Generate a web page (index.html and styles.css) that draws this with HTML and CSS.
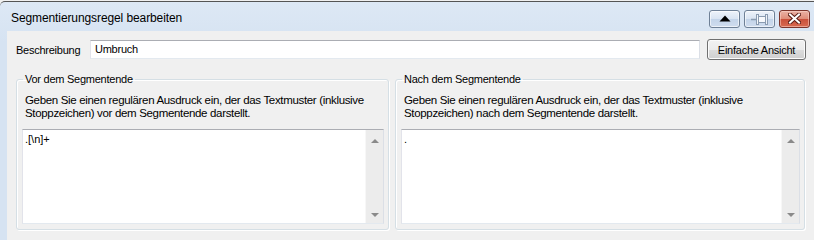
FILE: index.html
```html
<!DOCTYPE html>
<html lang="de">
<head>
    <meta charset="UTF-8">
    <meta name="viewport" content="width=device-width, initial-scale=1.0">
    <title>Segmentierungsregel bearbeiten</title>
    <link rel="stylesheet" href="styles.css">
</head>
<body>

    <div class="window">
        <div class="titlebar">
            <span class="title">Segmentierungsregel bearbeiten</span>
            <div class="caption">
                <span class="cap-btn">
                    <svg width="12" height="7" viewBox="0 0 12 7"><polygon points="6,0.5 11.5,6.5 0.5,6.5" fill="#000"/></svg>
                </span>
                <span class="cap-btn">
                    <svg width="20" height="14" viewBox="0 0 20 14">
                        <line x1="1" y1="7.5" x2="6" y2="7.5" stroke="#8b9cb1" stroke-width="1.5"/>
                        <rect x="6.5" y="2.5" width="2" height="10" fill="#f4f7fb" stroke="#8b9cb1" stroke-width="1"/>
                        <rect x="8.5" y="4.5" width="7" height="6" fill="#f7f9fc" stroke="#8b9cb1" stroke-width="1"/>
                        <rect x="15.5" y="2.5" width="2" height="10" fill="#eef2f8" stroke="#8b9cb1" stroke-width="1"/>
                    </svg>
                </span>
                <span class="cap-btn close">
                    <svg width="13" height="11" viewBox="0 0 13 11">
                        <path d="M2 1.5 L11 9.5 M11 1.5 L2 9.5" stroke="#5a1e16" stroke-width="4" stroke-linecap="square"/>
                        <path d="M2 1.5 L11 9.5 M11 1.5 L2 9.5" stroke="#fff" stroke-width="2" stroke-linecap="square"/>
                    </svg>
                </span>
            </div>
        </div>

        <div class="client">
            <div class="desc-row">
                <label class="desc-label">Beschreibung</label>
                <div class="textbox single">Umbruch</div>
                <button class="btn" type="button">Einfache Ansicht</button>
            </div>

            <div class="groups">
                <fieldset class="group">
                    <legend>Vor dem Segmentende</legend>
                    <p class="hint">Geben Sie einen regulären Ausdruck ein, der das Textmuster (inklusive<br>Stoppzeichen) vor dem Segmentende darstellt.</p>
                    <div class="textbox memo">
                        <div class="memo-text">.[\n]+</div>
                        <div class="vscroll">
                            <span class="arrow up"></span>
                            <span class="arrow down"></span>
                        </div>
                    </div>
                </fieldset>

                <fieldset class="group">
                    <legend>Nach dem Segmentende</legend>
                    <p class="hint">Geben Sie einen regulären Ausdruck ein, der das Textmuster (inklusive<br>Stoppzeichen) nach dem Segmentende darstellt.</p>
                    <div class="textbox memo">
                        <div class="memo-text">.</div>
                        <div class="vscroll">
                            <span class="arrow up"></span>
                            <span class="arrow down"></span>
                        </div>
                    </div>
                </fieldset>
            </div>
        </div>
    </div>

</body>
</html>
```

FILE: styles.css
```css
body {
    margin: 0;
    padding: 0;
    background: #f0f0f0;
    font-family: "Liberation Sans", Arial, sans-serif;
    font-size: 11px;
    color: #000;
    overflow: hidden;
}
.window {
    margin-top: 1px;
    height: 239px;
    border-top: 1px solid #555;
    border-top-left-radius: 5px;
    background: linear-gradient(#dde8f5, #d6e3f2 40px);
    padding-left: 7px;
    box-sizing: border-box;
    display: flex;
    flex-direction: column;
}
.titlebar {
    height: 29px;
    display: flex;
    align-items: center;
    padding: 0 4px 0 4px;
}
.title {
    flex: 1;
    font-size: 12px;
    letter-spacing: -0.1px;
    padding-top: 2px;
    color: #000;
}
.caption {
    display: flex;
    gap: 4px;
    padding-top: 4px;
}
.cap-btn {
    width: 29px;
    height: 16px;
    border: 1px solid #6e8096;
    border-radius: 3px;
    background: linear-gradient(#eef3fa 0%, #d9e4f2 50%, #c3d4e9 51%, #cfdcee 100%);
    box-shadow: inset 0 0 0 1px rgba(255, 255, 255, 0.6);
    display: flex;
    align-items: center;
    justify-content: center;
}
.cap-btn.close {
    border-color: #7c342b;
    background: linear-gradient(#eab2a5 0%, #df8c78 50%, #c9503b 51%, #d86a50 100%);
    box-shadow: inset 0 0 0 1px rgba(255, 220, 210, 0.5);
}
.client {
    flex: 1;
    background: #f0f0f0;
    padding: 8px 9px 0 9px;
}
.desc-row {
    display: flex;
    align-items: center;
    height: 21px;
}
.desc-label {
    width: 74px;
    letter-spacing: -0.25px;
}
.textbox {
    background: #fff;
    border: 1px solid;
    border-color: #abadb3 #dbdfe6 #e3e9ef #e2e3ea;
    box-sizing: border-box;
}
.single {
    flex: 1;
    height: 19px;
    line-height: 17px;
    padding-left: 4px;
    margin-right: 7px;
    letter-spacing: -0.25px;
}
.btn {
    width: 99px;
    height: 21px;
    margin-right: -1px;
    font-family: inherit;
    font-size: 11px;
    letter-spacing: -0.25px;
    color: #000;
    border: 1px solid #707070;
    border-radius: 3px;
    background: linear-gradient(#f2f2f2 0%, #ebebeb 50%, #dddddd 51%, #cfcfcf 100%);
    box-shadow: inset 0 0 0 1px #fbfbfb;
    padding: 0;
}
.groups {
    display: grid;
    grid-template-columns: 373px 1fr;
    column-gap: 6px;
    margin-top: 12px;
}
.group {
    margin: 0;
    padding: 0 4px 5px 5px;
    border: 1px solid #d5dfe5;
    border-radius: 3px;
    box-shadow: inset 1px 1px 0 #fff, 1px 1px 0 #fff;
    min-width: 0;
}
.group legend {
    margin-left: 1px;
    padding: 0 2px;
    line-height: 14px;
    letter-spacing: -0.25px;
}
.hint {
    margin: 8px 0 9px 3px;
    line-height: 13px;
    font-size: 11.5px;
    letter-spacing: -0.33px;
}
.memo {
    height: 95px;
    display: flex;
}
.memo-text {
    flex: 1;
    padding: 3px 2px;
    line-height: 13px;
}
.vscroll {
    width: 17px;
    background: #ececec;
    border-left: 1px solid #f7f7f7;
    display: flex;
    flex-direction: column;
    justify-content: space-between;
    align-items: center;
    padding: 9px 0 6px;
}
.arrow {
    width: 0;
    height: 0;
    border-left: 4px solid transparent;
    border-right: 4px solid transparent;
}
.arrow.up {
    border-bottom: 4px solid #8a8a8a;
}
.arrow.down {
    border-top: 4px solid #8a8a8a;
}
```
